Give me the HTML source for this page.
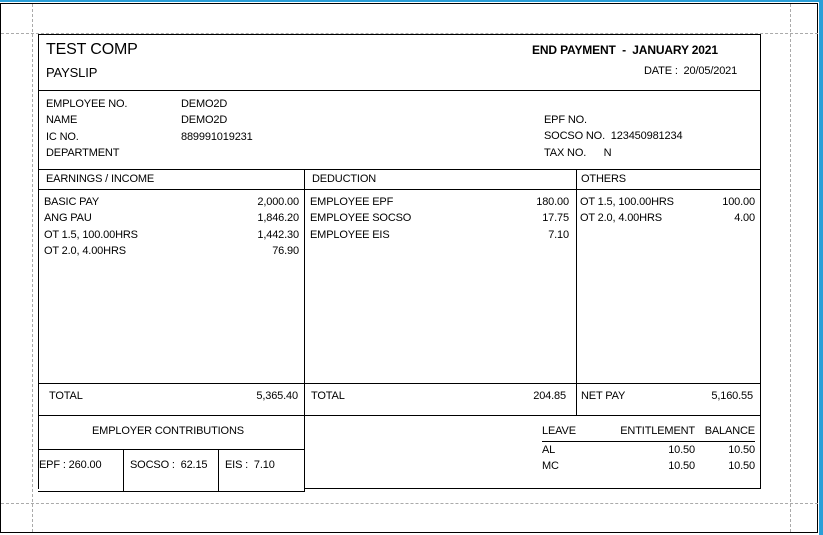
<!DOCTYPE html>
<html><head><style>
body{margin:0;width:823px;height:535px;background:#fff;position:relative;overflow:hidden;font-family:"Liberation Sans",Arial,sans-serif;font-size:11px;color:#000;letter-spacing:-0.15px}
.a{position:absolute;white-space:nowrap}
.l{position:absolute;background:#000}
.r{text-align:right}
</style></head><body>
<div class="a" style="left:0;top:0;width:823px;height:2px;background:#2a9fd8"></div>
<div class="a" style="left:819px;top:0;width:4px;height:535px;background:#2a9fd8"></div>
<div class="a" style="left:0;top:3px;width:818px;height:530px;border:1px solid #000;box-sizing:border-box"></div>
<div class="a" style="left:32px;top:4px;height:528px;border-left:1px dashed #aaa"></div>
<div class="a" style="left:790px;top:4px;height:528px;border-left:1px dashed #aaa"></div>
<div class="a" style="left:1px;top:33px;width:817px;border-top:1px dashed #aaa"></div>
<div class="a" style="left:1px;top:503px;width:817px;border-top:1px dashed #aaa"></div>

<div class="a" style="left:38px;top:34px;width:723px;height:455px;border:1px solid #000;border-bottom:none;box-sizing:border-box;background:#fff"></div>
<div class="l" style="left:304px;top:488px;width:457px;height:1px"></div>
<div class="l" style="left:38px;top:90px;width:723px;height:1px"></div>
<div class="l" style="left:38px;top:169px;width:723px;height:1px"></div>
<div class="l" style="left:38px;top:189px;width:723px;height:1px"></div>
<div class="l" style="left:38px;top:383px;width:723px;height:1px"></div>
<div class="l" style="left:38px;top:415px;width:723px;height:1px"></div>
<div class="l" style="left:304px;top:169px;width:1px;height:322px"></div>
<div class="l" style="left:576px;top:169px;width:1px;height:246px"></div>
<div class="l" style="left:38px;top:449px;width:266px;height:1px"></div>
<div class="l" style="left:38px;top:491px;width:267px;height:1px"></div>
<div class="l" style="left:123px;top:449px;width:1px;height:42px"></div>
<div class="l" style="left:218px;top:449px;width:1px;height:42px"></div>
<div class="l" style="left:542px;top:441px;width:213px;height:1px"></div>

<div class="a" style="left:46px;top:41px;font-size:16px">TEST COMP</div>
<div class="a" style="left:46px;top:65px;font-size:13px">PAYSLIP</div>
<div class="a" style="left:532px;top:43px;font-size:12px;font-weight:bold">END PAYMENT &nbsp;- &nbsp;JANUARY 2021</div>
<div class="a" style="left:644px;top:65px">DATE : &nbsp;20/05/2021</div>

<div class="a" style="left:46px;top:96px;line-height:16.3px">EMPLOYEE NO.<br>NAME<br>IC NO.<br>DEPARTMENT</div>
<div class="a" style="left:181px;top:96px;line-height:16.3px">DEMO2D<br>DEMO2D<br>889991019231</div>
<div class="a" style="left:544px;top:112px;line-height:16.3px">EPF NO.<br>SOCSO NO. &nbsp;123450981234<br>TAX NO. &nbsp;&nbsp;&nbsp;&nbsp;&nbsp;N</div>

<div class="a" style="left:46px;top:173px">EARNINGS / INCOME</div>
<div class="a" style="left:312px;top:173px">DEDUCTION</div>
<div class="a" style="left:581px;top:173px">OTHERS</div>

<div class="a" style="left:44px;top:194px;line-height:16.3px">BASIC PAY<br>ANG PAU<br>OT 1.5, 100.00HRS<br>OT 2.0, 4.00HRS</div>
<div class="a r" style="left:200px;width:99px;top:194px;line-height:16.3px">2,000.00<br>1,846.20<br>1,442.30<br>76.90</div>
<div class="a" style="left:310px;top:194px;line-height:16.3px">EMPLOYEE EPF<br>EMPLOYEE SOCSO<br>EMPLOYEE EIS</div>
<div class="a r" style="left:470px;width:99px;top:194px;line-height:16.3px">180.00<br>17.75<br>7.10</div>
<div class="a" style="left:580px;top:194px;line-height:16.3px">OT 1.5, 100.00HRS<br>OT 2.0, 4.00HRS</div>
<div class="a r" style="left:656px;width:99px;top:194px;line-height:16.3px">100.00<br>4.00</div>

<div class="a" style="left:49px;top:390px">TOTAL</div>
<div class="a r" style="left:200px;width:98px;top:390px">5,365.40</div>
<div class="a" style="left:311px;top:390px">TOTAL</div>
<div class="a r" style="left:470px;width:96px;top:390px">204.85</div>
<div class="a" style="left:581px;top:390px">NET PAY</div>
<div class="a r" style="left:656px;width:97px;top:390px">5,160.55</div>

<div class="a" style="left:92px;top:425px">EMPLOYER CONTRIBUTIONS</div>
<div class="a" style="left:39px;top:459px">EPF : 260.00</div>
<div class="a" style="left:130px;top:459px">SOCSO : &nbsp;62.15</div>
<div class="a" style="left:225px;top:459px">EIS : &nbsp;7.10</div>

<div class="a" style="left:542px;top:425px">LEAVE</div>
<div class="a r" style="left:595px;width:100px;top:425px">ENTITLEMENT</div>
<div class="a r" style="left:695px;width:60px;top:425px">BALANCE</div>
<div class="a" style="left:542px;top:442px;line-height:16.3px">AL<br>MC</div>
<div class="a r" style="left:595px;width:100px;top:442px;line-height:16.3px">10.50<br>10.50</div>
<div class="a r" style="left:695px;width:60px;top:442px;line-height:16.3px">10.50<br>10.50</div>
</body></html>
